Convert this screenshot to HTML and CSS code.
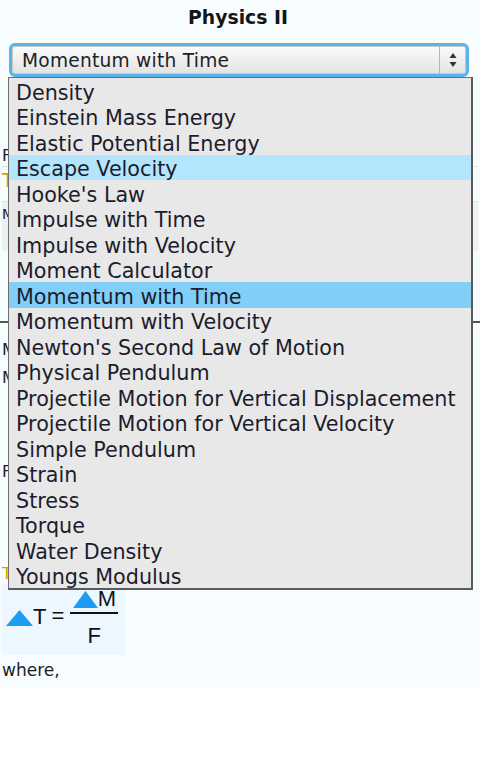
FILE: index.html
```html
<!DOCTYPE html>
<html>
<head>
<meta charset="utf-8">
<link rel="stylesheet" href="styles.css">
</head>
<body>
<div class="page">
  <h1 class="title">Physics II</h1>
  <div class="select-wrap">
    <div class="select">
      <span class="select-text">Momentum with Time</span>
      <span class="select-arrows">
        <svg width="8" height="18" viewBox="0 0 8 18"><path d="M4 2 L7.5 7 L0.5 7 Z" fill="#333"/><path d="M0.5 11 L7.5 11 L4 16 Z" fill="#333"/></svg>
      </span>
    </div>
    <ul class="dropdown">
      <li>Density</li>
      <li>Einstein Mass Energy</li>
      <li>Elastic Potential Energy</li>
      <li class="hover">Escape Velocity</li>
      <li>Hooke's Law</li>
      <li>Impulse with Time</li>
      <li>Impulse with Velocity</li>
      <li>Moment Calculator</li>
      <li class="selected">Momentum with Time</li>
      <li>Momentum with Velocity</li>
      <li>Newton's Second Law of Motion</li>
      <li>Physical Pendulum</li>
      <li>Projectile Motion for Vertical Displacement</li>
      <li>Projectile Motion for Vertical Velocity</li>
      <li>Simple Pendulum</li>
      <li>Strain</li>
      <li>Stress</li>
      <li>Torque</li>
      <li>Water Density</li>
      <li>Youngs Modulus</li>
    </ul>
  </div>

  <div class="under">
    <div class="u-line u-f1">F</div>
    <div class="u-row u-t1"><span class="var">T</span></div>
    <div class="u-row u-band u-m1">M</div>
    <div class="u-rule"></div>
    <div class="u-line u-m2">M</div>
    <div class="u-line u-m3">M</div>
    <div class="u-line u-f2">F</div>
    <div class="u-line u-t2"><span class="var">T</span></div>
  </div>

  <div class="formula">
    <svg class="tri tri-main" width="27" height="16" viewBox="0 0 27 16"><path d="M13.5 0 L27 16 L0 16 Z" fill="#1e9cf2"/></svg>
    <span class="sym sym-main">T</span>
    <span class="eq">=</span>
    <div class="frac">
      <div class="num">
        <svg class="tri" width="25" height="17" viewBox="0 0 25 17"><path d="M12.5 0 L25 17 L0 17 Z" fill="#1e9cf2"/></svg><span class="sym">M</span>
      </div>
      <div class="bar"></div>
      <div class="den"><span class="sym">F</span></div>
    </div>
  </div>
  <p class="where">where,</p>
</div>
</body>
</html>
```

FILE: styles.css
```css
html, body {
  margin: 0;
  padding: 0;
  background: #ffffff;
}

.page {
  position: relative;
  background: #f7fcff;
  height: 688px;
  padding: 0 2px;
  font-family: "DejaVu Sans", Verdana, sans-serif;
  color: #1c1c28;
  overflow: hidden;
}

.title {
  margin: 0;
  padding: 7px 4px 0 0;
  height: 22px;
  line-height: 22px;
  font-size: 18.8px;
  font-weight: bold;
  text-align: center;
  color: #141414;
}

.select-wrap {
  position: relative;
  margin: 14px 9px 0 7px;
}

.select {
  height: 28px;
  border: 3px solid #5cb3ea;
  border-radius: 6px;
  background: linear-gradient(#fbfbfb, #e2e2e2);
  display: flex;
  align-items: center;
  box-shadow: inset 0 0 0 1px #c8c8c8;
}

.select-text {
  flex: 1;
  padding-left: 10px;
  font-size: 18.6px;
  color: #222;
  letter-spacing: 0.25px;
}

.select-arrows {
  width: 26px;
  height: 100%;
  border-left: 1px solid #b5b5b5;
  display: flex;
  align-items: center;
  justify-content: center;
}

.dropdown {
  position: absolute;
  top: 34px;
  left: -1px;
  width: 462px;
  margin: 0;
  padding: 0;
  list-style: none;
  background: #e8e8e8;
  border: 1px solid #6e6e6e;
  border-right: 2px solid #5a5a5a;
  border-bottom: 2px solid #5a5a5a;
  z-index: 5;
}

.dropdown li {
  height: 21px;
  line-height: 21px;
  padding: 4.5px 0 0 7px;
  font-size: 20.7px;
  color: #1c1c2c;
  white-space: nowrap;
}

.dropdown li.hover {
  background: #b3e5fc;
}

.dropdown li.selected {
  background: #81cff9;
}

.under {
  font-size: 16px;
  color: #222;
}

.u-line {
  height: 20px;
  line-height: 20px;
}

.u-f1 { margin-top: 69px; }

.u-row {
  border-top: 1px solid #e0e4e8;
}

.u-t1 {
  height: 34px;
  line-height: 26px;
  font-size: 19px;
}

.var { color: #d9a100; }

.u-band {
  background: #eef1f4;
}

.u-m1 {
  height: 47px;
  font-size: 14px;
  line-height: 20px;
  padding-top: 2px;
}

.u-rule {
  height: 2px;
  margin: 70px -2px 0 -2px;
  background: #555;
}

.u-m2 { margin-top: 17px; }
.u-m3 { margin-top: 8px; }
.u-f2 { margin-top: 74px; }
.u-t2 { margin-top: 82px; }

.formula {
  margin-top: 0;
  width: 119px;
  height: 71px;
  padding-left: 4px;
  background: #ecf7ff;
  display: flex;
  align-items: flex-start;
  font-family: "Liberation Sans", Arial, sans-serif;
  font-size: 22px;
  color: #111;
}

.formula .tri {
  display: block;
  flex: none;
}

.formula .tri-main {
  margin-top: 26px;
}

.sym {
  line-height: 22px;
}

.sym-main {
  margin-top: 22px;
}

.eq {
  margin: 21px 6px 0 5px;
  line-height: 22px;
}

.frac {
  display: flex;
  flex-direction: column;
  align-items: center;
  width: 48px;
  margin-top: 4px;
}

.num {
  display: flex;
  align-items: flex-end;
  height: 22px;
}

.num .tri {
  margin-bottom: 2px;
}

.bar {
  width: 48px;
  height: 2px;
  background: #111;
  margin: 2px 0 11px 0;
}

.den {
  height: 22px;
  line-height: 22px;
}

.where {
  margin: 4px 0 0 0;
  font-size: 17px;
  line-height: 22px;
  color: #1c1c28;
}
```
